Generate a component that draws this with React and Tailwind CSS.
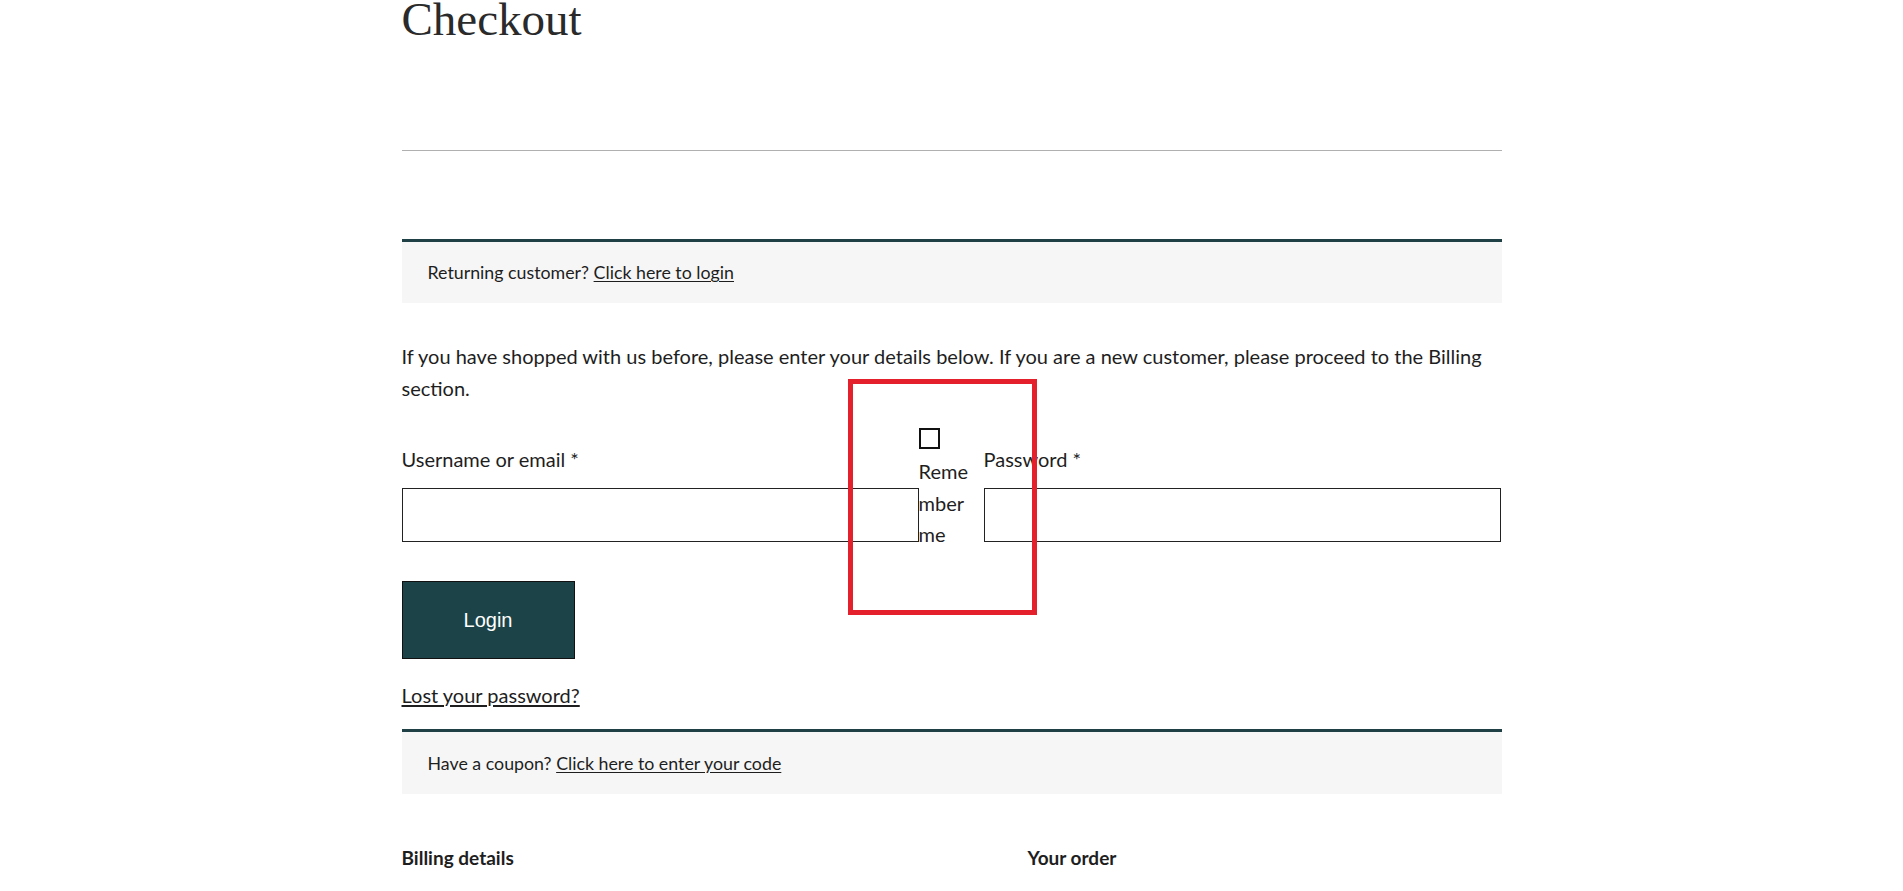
import React from "react";

export default function App() {
  const sans = { fontFamily: "Lato, 'Open Sans', sans-serif" };
  return (
    <div className="relative min-h-[891px] bg-white text-[#1e1e1e]" style={sans}>
      <div className="mx-auto w-[1100px]">
        <h1
          className="-mt-[4px] text-[47px] font-light leading-none text-[#2a2a2a]"
          style={{ fontFamily: "'Liberation Serif', 'DejaVu Serif', serif" }}
        >
          Checkout
        </h1>
        <div className="mt-[107px] h-px bg-[#b0b0b0]" />

        <div className="mt-[88px] flex h-[64px] items-center border-t-[3px] border-[#1f4146] bg-[#f6f6f6] px-[26px] text-[17.8px]">
          <span>
            Returning customer?{" "}
            <a href="#" className="underline underline-offset-2">
              Click here to login
            </a>
          </span>
        </div>

        <p className="mt-[38px] text-[20px] leading-[31.5px]">
          If you have shopped with us before, please enter your details below. If you are a new customer, please proceed to the Billing section.
        </p>

        <div className="mt-[24px] flex items-start">
          <div className="w-[517px] pt-[16px]">
            <label className="block text-[20px] leading-[31.5px]">Username or email *</label>
            <input
              type="text"
              className="mt-[12px] block h-[54px] w-full border border-[#222] bg-white px-3 outline-none"
            />
          </div>
          <div className="w-[65px] pr-[10px]">
            <div className="h-[21px] w-[21px] border-2 border-[#111] bg-white" />
            <div className="mt-[7px] break-all text-[20px] leading-[31.5px]">Remember me</div>
          </div>
          <div className="w-[517px] pt-[16px]">
            <label className="block text-[20px] leading-[31.5px]">Password *</label>
            <input
              type="password"
              className="mt-[12px] block h-[54px] w-full border border-[#222] bg-white px-3 outline-none"
            />
          </div>
        </div>

        <button
          className="mt-[30px] flex h-[78px] w-[173px] items-center justify-center border border-[#111] bg-[#1c4448] text-[20px] text-white"
          style={{ fontFamily: "'Liberation Sans', Arial, sans-serif" }}
        >
          Login
        </button>

        <div className="mt-[21px] text-[20px] leading-[31.5px]">
          <a href="#" className="underline underline-offset-2">
            Lost your password?
          </a>
        </div>

        <div className="mt-[18px] flex h-[65px] items-center border-t-[3px] border-[#1f4146] bg-[#f6f6f6] px-[26px] text-[17.8px]">
          <span>
            Have a coupon?{" "}
            <a href="#" className="underline underline-offset-2">
              Click here to enter your code
            </a>
          </span>
        </div>

        <div className="mt-[51px] flex text-[19px] font-bold leading-[26px]">
          <div className="w-[626px]">Billing details</div>
          <div>Your order</div>
        </div>
        <div className="h-[120px]" />
      </div>

      <div className="pointer-events-none absolute left-[848px] top-[383px] h-[236px] w-[189px] border-[5px] border-[#e3202b]" />
    </div>
  );
}
